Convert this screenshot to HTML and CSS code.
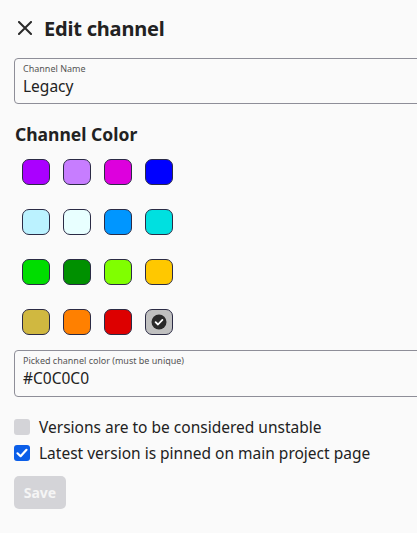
FILE: index.html
```html
<!DOCTYPE html>
<html>
<head>
<meta charset="utf-8">
<link rel="stylesheet" href="styles.css">
</head>
<body>
<div class="panel">
  <div class="title">
    <svg class="close" width="14" height="14" viewBox="0 0 14 14"><path d="M1 1 L13 13 M13 1 L1 13" stroke="#2a2a2a" stroke-width="2" stroke-linecap="square" fill="none"/></svg>
    <h1>Edit channel</h1>
  </div>
  <div class="field name-field">
    <div class="flabel">Channel Name</div>
    <div class="fvalue">Legacy</div>
  </div>
  <h2>Channel Color</h2>
  <div class="swatches">
    <div class="sw" style="background:#aa00ff"></div>
    <div class="sw" style="background:#c77dff"></div>
    <div class="sw" style="background:#dd00dd"></div>
    <div class="sw" style="background:#0000ff"></div>
    <div class="sw" style="background:#bbf2ff"></div>
    <div class="sw" style="background:#e8ffff"></div>
    <div class="sw" style="background:#0096ff"></div>
    <div class="sw" style="background:#00e0e0"></div>
    <div class="sw" style="background:#00dd00"></div>
    <div class="sw" style="background:#009000"></div>
    <div class="sw" style="background:#80ff00"></div>
    <div class="sw" style="background:#ffc800"></div>
    <div class="sw" style="background:#d0b840"></div>
    <div class="sw" style="background:#ff8000"></div>
    <div class="sw" style="background:#dd0000"></div>
    <div class="sw picked" style="background:#c0c0c0">
      <svg width="16" height="16" viewBox="0 0 16 16"><circle cx="8" cy="8" r="7.5" fill="#2a2a2a"/><path d="M4.6 8.2 L7 10.5 L11.4 5.9" stroke="#fff" stroke-width="1.8" fill="none" stroke-linecap="round" stroke-linejoin="round"/></svg>
    </div>
  </div>
  <div class="field color-field">
    <div class="flabel">Picked channel color (must be unique)</div>
    <div class="fvalue">#C0C0C0</div>
  </div>
  <label class="check">
    <span class="box"></span>
    <span>Versions are to be considered unstable</span>
  </label>
  <label class="check">
    <span class="box on"><svg width="16" height="16" viewBox="0 0 16 16"><path d="M3.5 8.3 L6.6 11.2 L12.5 4.8" stroke="#fff" stroke-width="2.2" fill="none" stroke-linecap="round" stroke-linejoin="round"/></svg></span>
    <span>Latest version is pinned on main project page</span>
  </label>
  <button class="save">Save</button>
</div>
</body>
</html>
```
FILE: styles.css
```css
html, body {
  margin: 0;
  padding: 0;
  background: #ffffff;
}
body {
  font-family: "Noto Sans", "Open Sans", sans-serif;
  color: #222;
}
.panel {
  background: #fafafa;
  width: 100%;
  height: 533px;
  box-sizing: border-box;
  padding: 15px 0 0 14px;
  overflow: hidden;
}
.title {
  display: flex;
  align-items: center;
  gap: 12px;
  padding-left: 4px;
  height: 26px;
}
.close {
  display: block;
}
h1 {
  margin: 0;
  font-size: 20px;
  font-weight: 700;
  color: #222;
  letter-spacing: -0.2px;
}
.field {
  border: 1px solid #8e8e98;
  border-radius: 4px;
  width: calc(100% + 12px);
  height: 46px;
  box-sizing: border-box;
  padding: 4px 8px 0;
}
.name-field {
  margin-top: 17px;
}
.flabel {
  font-size: 9px;
  color: #555;
  line-height: 12px;
}
.fvalue {
  font-size: 15.5px;
  line-height: 18px;
  margin-top: 2px;
  color: #222;
}
h2 {
  margin: 18px 0 0 1px;
  font-size: 17.5px;
  font-weight: 700;
  line-height: 24px;
  color: #222;
}
.swatches {
  display: grid;
  grid-template-columns: repeat(4, 28px);
  column-gap: 13px;
  row-gap: 24px;
  margin: 13px 0 0 8px;
}
.sw {
  width: 28px;
  height: 26px;
  box-sizing: border-box;
  border: 1.5px solid #2b2b45;
  border-radius: 7px;
  display: flex;
  align-items: center;
  justify-content: center;
}
.sw svg {
  display: block;
}
.color-field {
  margin-top: 15px;
  height: 47px;
}
.check {
  display: flex;
  align-items: center;
  gap: 9px;
  font-size: 15.5px;
  line-height: 26px;
  color: #222;
}
.color-field + .check {
  margin-top: 17px;
}
.box {
  width: 16px;
  height: 16px;
  border-radius: 3px;
  background: #d4d4d8;
  display: flex;
  align-items: center;
  justify-content: center;
}
.box.on {
  background: #0b5ee8;
}
.box svg {
  display: block;
}
.save {
  margin-top: 10px;
  width: 52px;
  height: 33px;
  border: none;
  border-radius: 5px;
  background: #d4d4d8;
  color: #f5f5f5;
  font-family: "Noto Sans", "Open Sans", sans-serif;
  font-size: 14px;
  font-weight: 700;
  padding: 0;
}
```
